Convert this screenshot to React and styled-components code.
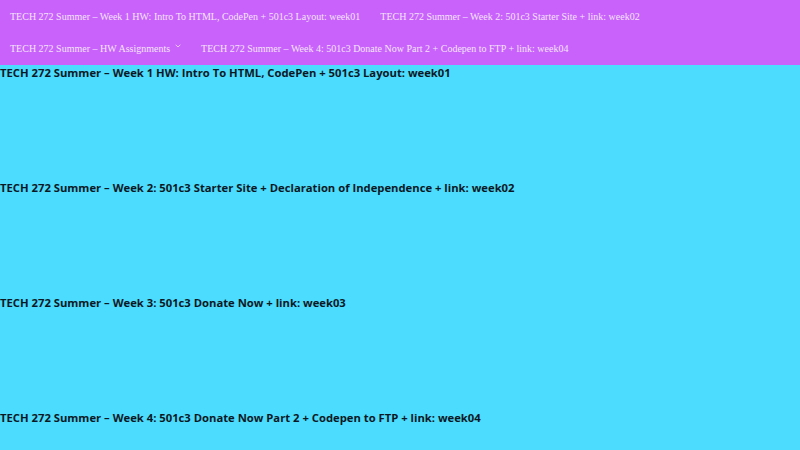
import React from 'react';
import styled, { createGlobalStyle } from 'styled-components';

const GlobalStyle = createGlobalStyle`
  html, body {
    margin: 0;
    padding: 0;
    background: #4cdcfe;
  }
`;

const menu = [
  [
    { label: 'TECH 272 Summer – Week 1 HW: Intro To HTML, CodePen + 501c3 Layout: week01' },
    { label: 'TECH 272 Summer – Week 2: 501c3 Starter Site + link: week02' },
  ],
  [
    { label: 'TECH 272 Summer – HW Assignments', sub: true },
    { label: 'TECH 272 Summer – Week 4: 501c3 Donate Now Part 2 + Codepen to FTP + link: week04' },
  ],
];

const posts = [
  'TECH 272 Summer – Week 1 HW: Intro To HTML, CodePen + 501c3 Layout: week01',
  'TECH 272 Summer – Week 2: 501c3 Starter Site + Declaration of Independence + link: week02',
  'TECH 272 Summer – Week 3: 501c3 Donate Now + link: week03',
  'TECH 272 Summer – Week 4: 501c3 Donate Now Part 2 + Codepen to FTP + link: week04',
];

function App() {
  return (
    <Page>
      <GlobalStyle />
      <Nav>
        {menu.map((row, i) => (
          <NavRow key={i}>
            {row.map((item) => (
              <NavItem key={item.label} href="#">
                {item.label}
                {item.sub && (
                  <Chevron viewBox="0 0 10 6">
                    <path d="M1 1l4 3.5L9 1" fill="none" stroke="currentColor" strokeWidth="1.3" />
                  </Chevron>
                )}
              </NavItem>
            ))}
          </NavRow>
        ))}
      </Nav>
      <Main>
        {posts.map((p) => (
          <PostTitle key={p}>{p}</PostTitle>
        ))}
      </Main>
    </Page>
  );
}

const Page = styled.div`
  background: #4cdcfe;
  min-height: 450px;
`;

const Nav = styled.nav`
  background: #c962fb;
  display: flex;
  flex-direction: column;
  padding: 0 0 1px;
`;

const NavRow = styled.div`
  display: flex;
  height: 32px;
  align-items: center;
`;

const NavItem = styled.a`
  display: flex;
  align-items: center;
  gap: 5px;
  padding: 0 10px;
  color: #f3e4fd;
  text-decoration: none;
  font-family: "Liberation Serif", serif;
  font-size: 10px;
`;

const Chevron = styled.svg`
  width: 6px;
  height: 4px;
  margin-top: -4px;
`;

const Main = styled.main`
  display: flex;
  flex-direction: column;
  gap: 99px;
`;

const PostTitle = styled.h2`
  margin: 0;
  font-family: "Open Sans", sans-serif;
  font-weight: 700;
  font-size: 11.25px;
  line-height: 16px;
  color: #0b1824;
`;

export default App;
